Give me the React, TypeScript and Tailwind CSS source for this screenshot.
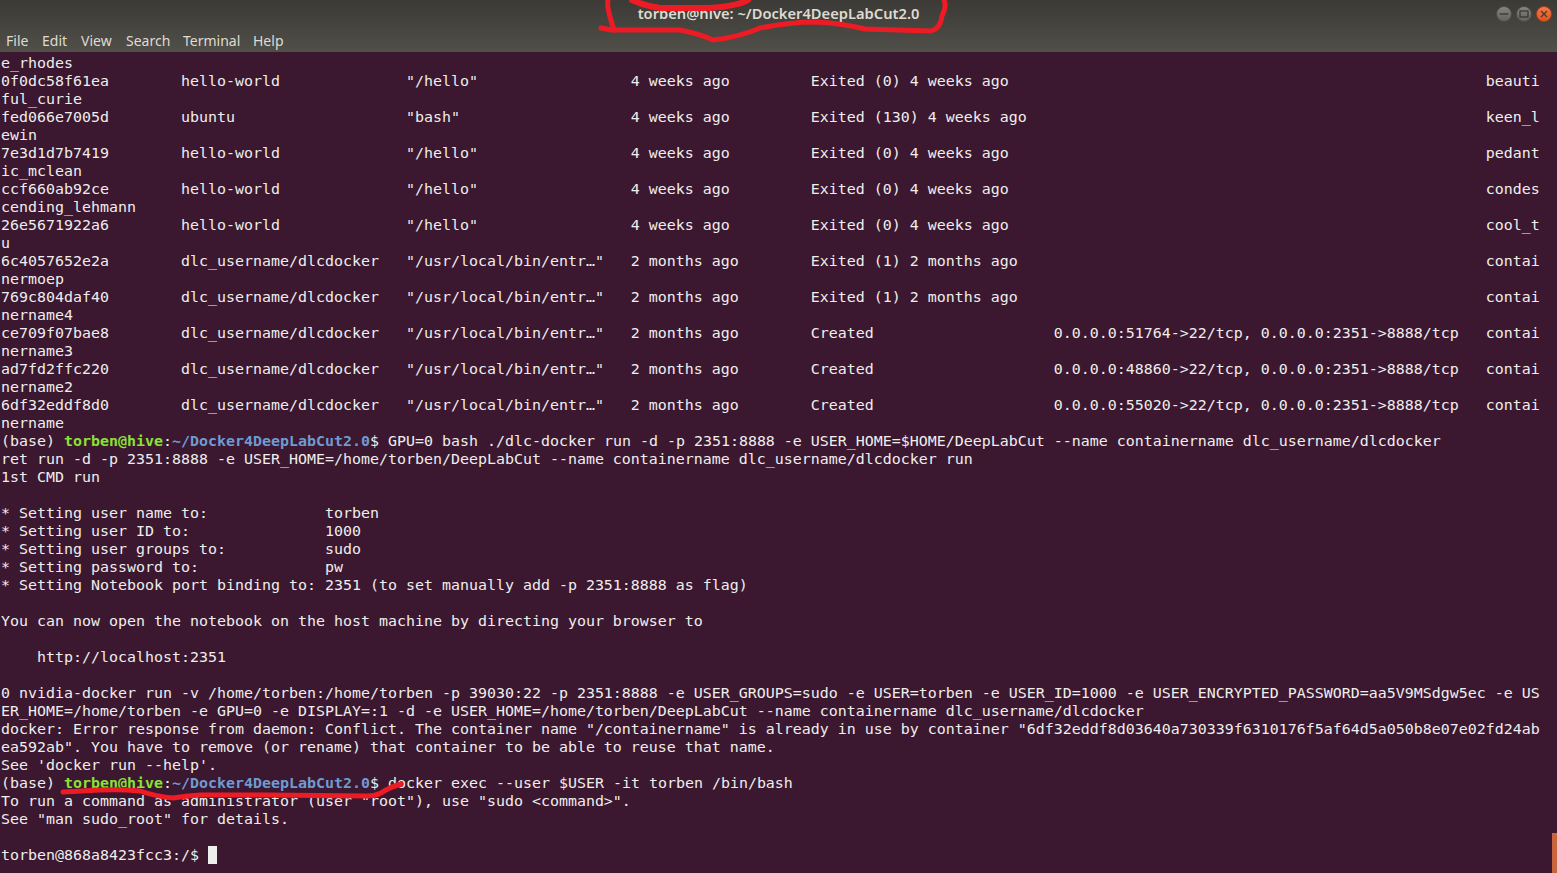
const row = (id: string, image: string, cmd: string, created: string, status: string, ports: string, name: string) =>
  id.padEnd(20) + image.padEnd(25) + cmd.padEnd(25) + created.padEnd(20) + status.padEnd(27) + ports.padEnd(48) + name;

const P1 = "0.0.0.0:51764->22/tcp, 0.0.0.0:2351->8888/tcp";
const P2 = "0.0.0.0:48860->22/tcp, 0.0.0.0:2351->8888/tcp";
const P3 = "0.0.0.0:55020->22/tcp, 0.0.0.0:2351->8888/tcp";
const ENTRY = '"/usr/local/bin/entr…"';
const DLC = "dlc_username/dlcdocker";

const before = [
  "e_rhodes",
  row("0f0dc58f61ea", "hello-world", '"/hello"', "4 weeks ago", "Exited (0) 4 weeks ago", "", "beauti"),
  "ful_curie",
  row("fed066e7005d", "ubuntu", '"bash"', "4 weeks ago", "Exited (130) 4 weeks ago", "", "keen_l"),
  "ewin",
  row("7e3d1d7b7419", "hello-world", '"/hello"', "4 weeks ago", "Exited (0) 4 weeks ago", "", "pedant"),
  "ic_mclean",
  row("ccf660ab92ce", "hello-world", '"/hello"', "4 weeks ago", "Exited (0) 4 weeks ago", "", "condes"),
  "cending_lehmann",
  row("26e5671922a6", "hello-world", '"/hello"', "4 weeks ago", "Exited (0) 4 weeks ago", "", "cool_t"),
  "u",
  row("6c4057652e2a", DLC, ENTRY, "2 months ago", "Exited (1) 2 months ago", "", "contai"),
  "nermoep",
  row("769c804daf40", DLC, ENTRY, "2 months ago", "Exited (1) 2 months ago", "", "contai"),
  "nername4",
  row("ce709f07bae8", DLC, ENTRY, "2 months ago", "Created", P1, "contai"),
  "nername3",
  row("ad7fd2ffc220", DLC, ENTRY, "2 months ago", "Created", P2, "contai"),
  "nername2",
  row("6df32eddf8d0", DLC, ENTRY, "2 months ago", "Created", P3, "contai"),
  "nername",
];

const middle = [
  "ret run -d -p 2351:8888 -e USER_HOME=/home/torben/DeepLabCut --name containername dlc_username/dlcdocker run",
  "1st CMD run",
  "",
  "* Setting user name to:             torben",
  "* Setting user ID to:               1000",
  "* Setting user groups to:           sudo",
  "* Setting password to:              pw",
  "* Setting Notebook port binding to: 2351 (to set manually add -p 2351:8888 as flag)",
  "",
  "You can now open the notebook on the host machine by directing your browser to",
  "",
  "    http://localhost:2351",
  "",
  "0 nvidia-docker run -v /home/torben:/home/torben -p 39030:22 -p 2351:8888 -e USER_GROUPS=sudo -e USER=torben -e USER_ID=1000 -e USER_ENCRYPTED_PASSWORD=aa5V9MSdgw5ec -e US",
  "ER_HOME=/home/torben -e GPU=0 -e DISPLAY=:1 -d -e USER_HOME=/home/torben/DeepLabCut --name containername dlc_username/dlcdocker",
  'docker: Error response from daemon: Conflict. The container name "/containername" is already in use by container "6df32eddf8d03640a730339f6310176f5af64d5a050b8e07e02fd24ab',
  'ea592ab". You have to remove (or rename) that container to be able to reuse that name.',
  "See 'docker run --help'.",
];

const after = [
  'To run a command as administrator (user "root"), use "sudo <command>".',
  'See "man sudo_root" for details.',
  "",
];

function Line({ children }: { children?: React.ReactNode }) {
  return <div className="h-[18px] leading-[18px] whitespace-pre">{children}</div>;
}

function Prompt({ command }: { command: string }) {
  return (
    <Line>
      (base) <span className="font-bold text-[#8ae234]">torben@hive</span>:
      <span className="font-bold text-[#6f9bd0]">~/Docker4DeepLabCut2.0</span>$ {command}
    </Line>
  );
}

function WinButton({ kind }: { kind: "min" | "max" | "close" }) {
  const close = kind === "close";
  return (
    <div
      className={
        close
          ? "flex h-4 w-4 items-center justify-center rounded-full border border-[#a8431c] bg-linear-to-b from-[#f37a48] to-[#e0531c]"
          : "flex h-4 w-4 items-center justify-center rounded-full border border-[#4d4c47] bg-linear-to-b from-[#85847f] to-[#63625d]"
      }
    >
      <svg width="10" height="10" viewBox="0 0 10 10" fill="none" stroke={close ? "#3c3b37" : "#35342f"} strokeWidth="1.2">
        {kind === "min" && <path d="M0.5 5H9.5" />}
        {kind === "max" && <rect x="1" y="2" width="8" height="6" />}
        {kind === "close" && <path d="M2 2L8 8M8 2L2 8" />}
      </svg>
    </div>
  );
}

const MENU: [string, string][] = [
  ["File", "w-[24px]"],
  ["Edit", "w-[27px]"],
  ["View", "w-[33px]"],
  ["Search", "w-[45px]"],
  ["Terminal", "w-[58px]"],
  ["Help", "w-[30px]"],
];

export default function App() {
  return (
    <div className="relative flex h-[873px] w-[1557px] flex-col overflow-hidden bg-[#3b1730]">
      <header
        className="flex h-[52px] shrink-0 flex-col bg-linear-to-b from-[#3b3a36] to-[#514f48] text-[14px] text-[#dfdbd2]"
        style={{ fontFamily: '"Noto Sans", sans-serif' }}
      >
        <div className="relative flex h-[26px] items-center justify-center">
          <span className="text-[14.7px] font-semibold text-[#dfdbd2]">torben@hive: ~/Docker4DeepLabCut2.0</span>
          <div className="absolute right-[5px] top-[6px] flex gap-1">
            <WinButton kind="min" />
            <WinButton kind="max" />
            <WinButton kind="close" />
          </div>
        </div>
        <nav className="mt-[2px] flex h-[24px] items-center gap-3 pl-1.5">
          {MENU.map(([label, w]) => (
            <span key={label} className={`${w} whitespace-nowrap`}>
              {label}
            </span>
          ))}
        </nav>
      </header>

      <main
        className="pl-px pt-[2px] text-[14.955px] tracking-[0.005px] text-[#eeeeec]"
        style={{ fontFamily: '"DejaVu Sans Mono", monospace' }}
      >
        {before.map((l, i) => (
          <Line key={`b${i}`}>{l}</Line>
        ))}
        <Prompt command="GPU=0 bash ./dlc-docker run -d -p 2351:8888 -e USER_HOME=$HOME/DeepLabCut --name containername dlc_username/dlcdocker" />
        {middle.map((l, i) => (
          <Line key={`m${i}`}>{l}</Line>
        ))}
        <Prompt command="docker exec --user $USER -it torben /bin/bash" />
        {after.map((l, i) => (
          <Line key={`a${i}`}>{l}</Line>
        ))}
        <Line>
          torben@868a8423fcc3:/$ <span className="inline-block h-[18px] w-[9px] bg-[#eeeeec] align-top" />
        </Line>
      </main>

      <div className="absolute bottom-0 right-0 h-[40px] w-[5px] bg-[#c8643e]" />

      <svg className="pointer-events-none absolute left-0 top-0" width="1557" height="873" fill="none" stroke="#ed1c24" strokeLinecap="round" strokeLinejoin="round">
        <path strokeWidth="5" d="M608 0C606 8 611 20 614 30" />
        <path strokeWidth="5" d="M601 28L612 30L680 30Q700 34 713 40Q740 37 760 28Q790 22 815 22Q840 23 865 29L930 31Q940 30 942 16Q947 6 944 0" />
        <path strokeWidth="6" d="M632 0Q645 6 660 8L710 8Q738 6 748 0" />
        <path strokeWidth="5" d="M63 792Q80 791 100 790Q120 789 140 791Q158 797 173 798Q185 796 200 795L267 795L367 796Q375 796 381 793Q390 787 401 784" />
      </svg>
    </div>
  );
}
